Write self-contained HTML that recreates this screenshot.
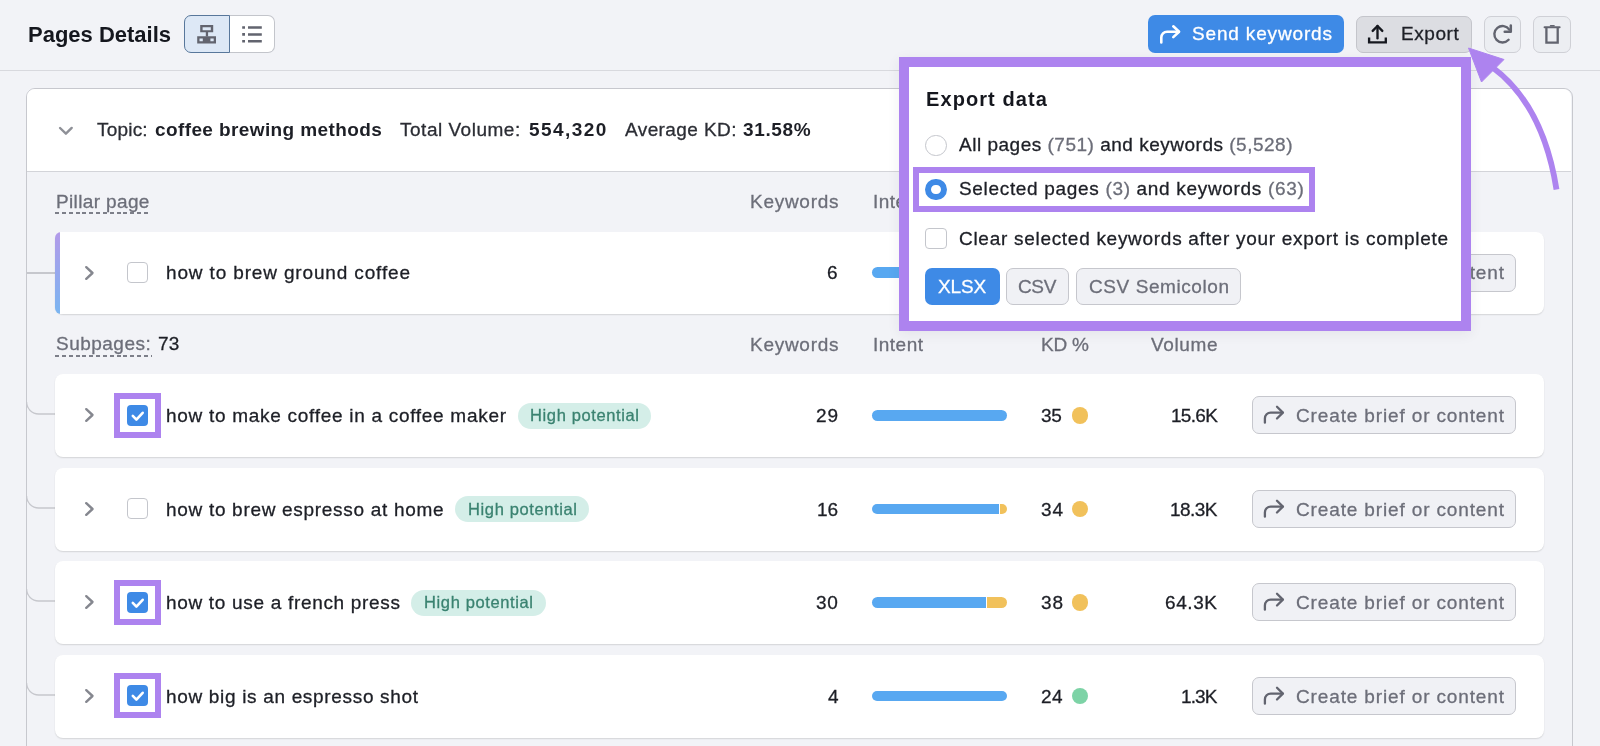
<!DOCTYPE html>
<html><head><meta charset="utf-8"><style>
html,body{margin:0;padding:0;}
body{width:1600px;height:746px;overflow:hidden;position:relative;background:#f2f3f7;font-family:"Liberation Sans",sans-serif;}
.a{position:absolute;}
.t{position:absolute;white-space:nowrap;line-height:1;will-change:transform;-webkit-text-stroke:0.3px currentColor;}
</style></head><body>
<div class="a" style="left:0.00px;top:70.00px;width:1600.00px;height:1.20px;background:#d8d9de"></div>
<div class="t " style="left:28.00px;top:24.18px;font-size:22.00px;letter-spacing:-0.006px;color:#15171e"><span style="font-weight:700;-webkit-text-stroke:0">Pages Details</span></div>
<div class="a" style="left:229.00px;top:15.00px;width:46.00px;height:38.00px;background:#fff;border:1.3px solid #c3c5cb;border-left:none;border-radius:0 7px 7px 0;box-sizing:border-box"></div>
<div class="a" style="left:184.00px;top:15.00px;width:46.00px;height:38.00px;background:#dde8f6;border:1.3px solid #58779b;border-radius:7px 0 0 7px;box-sizing:border-box"></div>
<svg class="a" style="left:190px;top:20px" width="80" height="30" viewBox="190 20 80 30"><g fill="#62646f" fill-rule="evenodd"><path d="M200.2 25h13v7.3h-13zM202.6 27.3v2.9h8.2v-2.9z"/><path d="M205.8 32h2.3v4.5h-2.3z"/><path d="M197.2 36.2h18.8v7.3h-18.8zM199.5 38.4v2.9h3.3v-2.9zM210.4 38.4v2.9h3.3v-2.9z"/><path d="M242.2 26.2h2.8v2.6h-2.8zM248 26.3h13.8v2.5h-13.8zM242.2 33.1h2.8v2.6h-2.8zM248 33.2h13.8v2.5h-13.8zM242.2 40h2.8v2.6h-2.8zM248 40.1h13.8v2.5h-13.8z"/></g></svg>
<div class="a" style="left:1148.00px;top:15.00px;width:196.00px;height:38.00px;background:#3e8ae6;border-radius:7px"></div>
<svg class="a" style="left:1150px;top:20px" width="40" height="30" viewBox="1150 20 40 30"><g fill="none" stroke="#fff" stroke-width="2.6" stroke-linecap="round" stroke-linejoin="round"><path d="M1161.3 42.5V37.5A5.8 5.8 0 0 1 1167.1 31.7H1178.6"/><path d="M1173.3 26.3L1179.1 31.7L1173.3 37.1"/></g></svg>
<div class="t " style="left:1192.40px;top:24.32px;font-size:19.00px;letter-spacing:0.841px;color:#fff">Send keywords</div>
<div class="a" style="left:1356.00px;top:15.50px;width:116.00px;height:37.50px;background:#dcdde2;border:1.2px solid #c4c5cb;border-radius:7px;box-sizing:border-box"></div>
<svg class="a" style="left:1360px;top:20px" width="40" height="30" viewBox="1360 20 40 30"><g fill="none" stroke="#16181f" stroke-width="2.35" stroke-linecap="round" stroke-linejoin="round"><path d="M1369.1 38.6V42.4H1385.8V38.6" stroke-linecap="square" stroke-linejoin="miter"/><path d="M1377.5 26V38.2"/><path d="M1372.7 30.9L1377.5 26L1382.3 30.9"/></g></svg>
<div class="t " style="left:1401.40px;top:24.32px;font-size:19.00px;letter-spacing:0.558px;color:#1d1f26">Export</div>
<div class="a" style="left:1483.50px;top:15.50px;width:37.50px;height:37.50px;background:#eceef2;border:1.2px solid #cfd0d6;border-radius:7px;box-sizing:border-box"></div>
<div class="a" style="left:1533.00px;top:15.50px;width:38.00px;height:37.50px;background:#eceef2;border:1.2px solid #cfd0d6;border-radius:7px;box-sizing:border-box"></div>
<svg class="a" style="left:1486px;top:18px" width="80" height="32" viewBox="1486 18 80 32"><g fill="none" stroke="#62646f" stroke-linecap="round" stroke-linejoin="round"><path d="M1508.6 39.8A8.2 8.2 0 1 1 1509.3 29.6" stroke-width="2.4"/><path d="M1510.8 25.6V31.7H1504.7" stroke-width="2.5"/><path d="M1544.6 27.3H1559.6" stroke-width="2.1"/><path d="M1550.6 25.7H1554" stroke-width="1.6"/><path d="M1546.4 28.2V42.6H1557.7V28.2" stroke-width="2.3" stroke-linejoin="miter"/></g></svg>
<div class="a" style="left:26.00px;top:88.00px;width:1546.50px;height:712.00px;background:#f2f3f7;border:1.6px solid #c7c8ce;border-radius:9px;box-sizing:border-box"></div>
<div class="a" style="left:27.40px;top:89.40px;width:1543.70px;height:82.60px;background:#fff;border-radius:8px 8px 0 0;border-bottom:1.2px solid #d3d4d9;box-sizing:border-box"></div>
<svg class="a" style="left:57px;top:124px" width="18" height="14" viewBox="0 0 18 14"><path d="M3.05 4L8.9 9.7L14.7 3.9" fill="none" stroke="#8e9097" stroke-width="2.4" stroke-linecap="round" stroke-linejoin="round"/></svg>
<div class="t " style="left:96.60px;top:120.22px;font-size:19.00px;letter-spacing:0.194px;color:#2b2d34">Topic:</div>
<div class="t " style="left:155.30px;top:120.22px;font-size:19.00px;letter-spacing:0.393px;"><span style="font-weight:700;-webkit-text-stroke:0;color:#1d1f26">coffee brewing methods</span></div>
<div class="t " style="left:400.20px;top:120.22px;font-size:19.00px;letter-spacing:0.512px;color:#2b2d34">Total Volume:</div>
<div class="t " style="left:528.60px;top:120.22px;font-size:19.00px;letter-spacing:1.453px;"><span style="font-weight:700;-webkit-text-stroke:0;color:#1d1f26">554,320</span></div>
<div class="t " style="left:624.60px;top:120.22px;font-size:19.00px;letter-spacing:0.403px;color:#2b2d34">Average KD:</div>
<div class="t " style="left:742.90px;top:120.22px;font-size:19.00px;letter-spacing:0.630px;"><span style="font-weight:700;-webkit-text-stroke:0;color:#1d1f26">31.58%</span></div>
<div class="t " style="left:56.40px;top:191.52px;font-size:19.00px;letter-spacing:0.363px;color:#6c6e79">Pillar page</div>
<div class="a" style="left:55.20px;top:212.20px;width:95.80px;height:1.80px;background:repeating-linear-gradient(90deg,#7d7f89 0,#7d7f89 4px,transparent 4px,transparent 6.85px)"></div>
<div class="t " style="left:750.00px;top:191.92px;font-size:19.00px;letter-spacing:0.724px;color:#6c6e79">Keywords</div>
<div class="t " style="left:873.00px;top:191.92px;font-size:19.00px;letter-spacing:0.492px;color:#6c6e79">Intent</div>
<div class="a" style="left:26.50px;top:272.40px;width:29.50px;height:1.30px;background:#c6c7cd"></div>
<div class="a" style="left:55.00px;top:231.50px;width:1489.00px;height:82.50px;background:#fff;border-radius:8px;box-shadow:0 1px 1.5px rgba(0,0,0,0.13)"></div>
<div class="a" style="left:55.00px;top:231.50px;width:6.00px;height:82.50px;background:linear-gradient(#b39ae9,#7ab5f1);border-radius:8px 0 0 8px"></div>
<div class="a" style="left:59.50px;top:231.50px;width:4.50px;height:82.50px;background:#fff"></div>
<svg class="a" style="left:82px;top:264.50px" width="14" height="16" viewBox="0 0 14 16"><path d="M4.25 2.15L10.5 8L4.25 13.85" fill="none" stroke="#85878f" stroke-width="2.4" stroke-linecap="round" stroke-linejoin="round"/></svg>
<div class="a" style="left:126.60px;top:261.80px;width:21.40px;height:21.40px;background:#fff;border:1.3px solid #c4c6cc;border-radius:4px;box-sizing:border-box"></div>
<div class="t " style="left:166.00px;top:263.12px;font-size:19.00px;letter-spacing:0.851px;color:#1d1f26">how to brew ground coffee</div>
<div class="t " style="left:827.44px;top:263.12px;font-size:19.00px;letter-spacing:0.000px;color:#1d1f26">6</div>
<div class="a" style="left:872.00px;top:267.20px;width:134.60px;height:10.60px;background:#58a8f1;border-radius:6px"></div>
<div class="a" style="left:1252.00px;top:253.50px;width:264.00px;height:38.00px;background:#f0f1f5;border:1.3px solid #c6c7cd;border-radius:7px;box-sizing:border-box"></div><svg class="a" style="left:1250px;top:257.50px" width="40" height="30" viewBox="1250 257.50 40 30"><g fill="none" stroke="#62646f" stroke-width="2.3" stroke-linecap="round" stroke-linejoin="round"><path d="M1264.9 280.20V275.90A5.8 5.8 0 0 1 1270.7 270.10H1282.6"/><path d="M1277 264.20L1282.9 270.10L1277 276.00"/></g></svg><div class="t " style="left:1296.00px;top:263.32px;font-size:19.00px;letter-spacing:0.861px;color:#6c6e79">Create brief or content</div>
<div class="t " style="left:56.10px;top:334.42px;font-size:19.00px;letter-spacing:0.480px;color:#6c6e79">Subpages:</div>
<div class="t " style="left:157.80px;top:334.42px;font-size:19.00px;letter-spacing:0.272px;color:#1d1f26">73</div>
<div class="a" style="left:55.20px;top:355.20px;width:96.80px;height:1.80px;background:repeating-linear-gradient(90deg,#7d7f89 0,#7d7f89 4px,transparent 4px,transparent 6.85px)"></div>
<div class="t " style="left:750.00px;top:334.52px;font-size:19.00px;letter-spacing:0.724px;color:#6c6e79">Keywords</div>
<div class="t " style="left:873.00px;top:334.52px;font-size:19.00px;letter-spacing:0.492px;color:#6c6e79">Intent</div>
<div class="t " style="left:1041.00px;top:334.52px;font-size:19.00px;letter-spacing:-0.188px;color:#6c6e79">KD %</div>
<div class="t " style="left:1151.00px;top:334.52px;font-size:19.00px;letter-spacing:0.627px;color:#6c6e79">Volume</div>
<svg class="a" style="left:26px;top:376.30px" width="31" height="40" viewBox="0 0 31 40"><path d="M0.6 26a12 12 0 0 0 12 12H31" fill="none" stroke="#c6c7cd" stroke-width="1.3"/></svg>
<div class="a" style="left:55.00px;top:374.00px;width:1489.00px;height:83.00px;background:#fff;border-radius:8px;box-shadow:0 1px 1.5px rgba(0,0,0,0.13)"></div>
<svg class="a" style="left:82px;top:407.30px" width="14" height="16" viewBox="0 0 14 16"><path d="M4.25 2.15L10.5 8L4.25 13.85" fill="none" stroke="#85878f" stroke-width="2.4" stroke-linecap="round" stroke-linejoin="round"/></svg>
<div class="a" style="left:114.00px;top:392.80px;width:47.00px;height:45.00px;border:6.5px solid #ad83ef;box-sizing:border-box"></div>
<div class="a" style="left:126.60px;top:404.60px;width:21.40px;height:21.40px;background:#3e8ae6;border-radius:4px"></div><svg class="a" style="left:126.6px;top:404.60px" width="21.4" height="21.4" viewBox="0 0 21.4 21.4"><path d="M5.8 10.9l3.6 3.7 6.3-6.8" fill="none" stroke="#fff" stroke-width="2.6" stroke-linecap="round" stroke-linejoin="round"/></svg>
<div class="t " style="left:166.00px;top:406.12px;font-size:19.00px;letter-spacing:0.712px;color:#1d1f26">how to make coffee in a coffee maker</div>
<div class="a" style="left:517.90px;top:402.80px;width:133.30px;height:26.20px;background:#d4eee8;border-radius:14px"></div>
<div class="t " style="left:530.20px;top:407.13px;font-size:16.50px;letter-spacing:0.623px;color:#3a8270">High potential</div>
<div class="t " style="left:816.00px;top:406.12px;font-size:19.00px;letter-spacing:0.872px;color:#1d1f26">29</div>
<div class="a" style="left:872.00px;top:410.00px;width:134.60px;height:10.60px;background:#58a8f1;border-radius:6px"></div>
<div class="t " style="left:1040.60px;top:406.12px;font-size:19.00px;letter-spacing:-0.328px;color:#1d1f26">35</div>
<div class="a" style="left:1071.60px;top:407.00px;width:16.60px;height:16.60px;background:#f1c15b;border-radius:50%"></div>
<div class="t " style="left:1170.60px;top:406.12px;font-size:19.00px;letter-spacing:-0.712px;color:#1d1f26">15.6K</div>
<div class="a" style="left:1252.00px;top:396.30px;width:264.00px;height:38.00px;background:#f0f1f5;border:1.3px solid #c6c7cd;border-radius:7px;box-sizing:border-box"></div><svg class="a" style="left:1250px;top:400.30px" width="40" height="30" viewBox="1250 400.30 40 30"><g fill="none" stroke="#62646f" stroke-width="2.3" stroke-linecap="round" stroke-linejoin="round"><path d="M1264.9 423.00V418.70A5.8 5.8 0 0 1 1270.7 412.90H1282.6"/><path d="M1277 407.00L1282.9 412.90L1277 418.80"/></g></svg><div class="t " style="left:1296.00px;top:406.12px;font-size:19.00px;letter-spacing:0.861px;color:#6c6e79">Create brief or content</div>
<svg class="a" style="left:26px;top:469.80px" width="31" height="40" viewBox="0 0 31 40"><path d="M0.6 26a12 12 0 0 0 12 12H31" fill="none" stroke="#c6c7cd" stroke-width="1.3"/></svg>
<div class="a" style="left:55.00px;top:467.50px;width:1489.00px;height:83.00px;background:#fff;border-radius:8px;box-shadow:0 1px 1.5px rgba(0,0,0,0.13)"></div>
<svg class="a" style="left:82px;top:500.80px" width="14" height="16" viewBox="0 0 14 16"><path d="M4.25 2.15L10.5 8L4.25 13.85" fill="none" stroke="#85878f" stroke-width="2.4" stroke-linecap="round" stroke-linejoin="round"/></svg>
<div class="a" style="left:126.60px;top:498.10px;width:21.40px;height:21.40px;background:#fff;border:1.3px solid #c4c6cc;border-radius:4px;box-sizing:border-box"></div>
<div class="t " style="left:166.00px;top:499.62px;font-size:19.00px;letter-spacing:0.695px;color:#1d1f26">how to brew espresso at home</div>
<div class="a" style="left:455.30px;top:496.30px;width:133.70px;height:26.20px;background:#d4eee8;border-radius:14px"></div>
<div class="t " style="left:467.60px;top:500.63px;font-size:16.50px;letter-spacing:0.623px;color:#3a8270">High potential</div>
<div class="t " style="left:816.87px;top:499.62px;font-size:19.00px;letter-spacing:0.000px;color:#1d1f26">16</div>
<div class="a" style="left:872.00px;top:503.50px;width:134.60px;height:10.60px;background:linear-gradient(90deg,#58a8f1 0,#58a8f1 126.5px,#fff 126.5px,#fff 127.7px,#f1c15b 127.7px);border-radius:6px"></div>
<div class="t " style="left:1040.60px;top:499.62px;font-size:19.00px;letter-spacing:0.872px;color:#1d1f26">34</div>
<div class="a" style="left:1071.60px;top:500.50px;width:16.60px;height:16.60px;background:#f1c15b;border-radius:50%"></div>
<div class="t " style="left:1170.10px;top:499.62px;font-size:19.00px;letter-spacing:-0.587px;color:#1d1f26">18.3K</div>
<div class="a" style="left:1252.00px;top:489.80px;width:264.00px;height:38.00px;background:#f0f1f5;border:1.3px solid #c6c7cd;border-radius:7px;box-sizing:border-box"></div><svg class="a" style="left:1250px;top:493.80px" width="40" height="30" viewBox="1250 493.80 40 30"><g fill="none" stroke="#62646f" stroke-width="2.3" stroke-linecap="round" stroke-linejoin="round"><path d="M1264.9 516.50V512.20A5.8 5.8 0 0 1 1270.7 506.40H1282.6"/><path d="M1277 500.50L1282.9 506.40L1277 512.30"/></g></svg><div class="t " style="left:1296.00px;top:499.62px;font-size:19.00px;letter-spacing:0.861px;color:#6c6e79">Create brief or content</div>
<svg class="a" style="left:26px;top:563.30px" width="31" height="40" viewBox="0 0 31 40"><path d="M0.6 26a12 12 0 0 0 12 12H31" fill="none" stroke="#c6c7cd" stroke-width="1.3"/></svg>
<div class="a" style="left:55.00px;top:561.00px;width:1489.00px;height:83.00px;background:#fff;border-radius:8px;box-shadow:0 1px 1.5px rgba(0,0,0,0.13)"></div>
<svg class="a" style="left:82px;top:594.30px" width="14" height="16" viewBox="0 0 14 16"><path d="M4.25 2.15L10.5 8L4.25 13.85" fill="none" stroke="#85878f" stroke-width="2.4" stroke-linecap="round" stroke-linejoin="round"/></svg>
<div class="a" style="left:114.00px;top:579.80px;width:47.00px;height:45.00px;border:6.5px solid #ad83ef;box-sizing:border-box"></div>
<div class="a" style="left:126.60px;top:591.60px;width:21.40px;height:21.40px;background:#3e8ae6;border-radius:4px"></div><svg class="a" style="left:126.6px;top:591.60px" width="21.4" height="21.4" viewBox="0 0 21.4 21.4"><path d="M5.8 10.9l3.6 3.7 6.3-6.8" fill="none" stroke="#fff" stroke-width="2.6" stroke-linecap="round" stroke-linejoin="round"/></svg>
<div class="t " style="left:166.00px;top:593.12px;font-size:19.00px;letter-spacing:0.685px;color:#1d1f26">how to use a french press</div>
<div class="a" style="left:411.40px;top:589.80px;width:134.60px;height:26.20px;background:#d4eee8;border-radius:14px"></div>
<div class="t " style="left:423.70px;top:594.13px;font-size:16.50px;letter-spacing:0.623px;color:#3a8270">High potential</div>
<div class="t " style="left:816.20px;top:593.12px;font-size:19.00px;letter-spacing:0.672px;color:#1d1f26">30</div>
<div class="a" style="left:872.00px;top:597.00px;width:134.60px;height:10.60px;background:linear-gradient(90deg,#58a8f1 0,#58a8f1 113.6px,#fff 113.6px,#fff 114.8px,#f1c15b 114.8px);border-radius:6px"></div>
<div class="t " style="left:1040.60px;top:593.12px;font-size:19.00px;letter-spacing:0.872px;color:#1d1f26">38</div>
<div class="a" style="left:1071.60px;top:594.00px;width:16.60px;height:16.60px;background:#f1c15b;border-radius:50%"></div>
<div class="t " style="left:1165.40px;top:593.12px;font-size:19.00px;letter-spacing:0.588px;color:#1d1f26">64.3K</div>
<div class="a" style="left:1252.00px;top:583.30px;width:264.00px;height:38.00px;background:#f0f1f5;border:1.3px solid #c6c7cd;border-radius:7px;box-sizing:border-box"></div><svg class="a" style="left:1250px;top:587.30px" width="40" height="30" viewBox="1250 587.30 40 30"><g fill="none" stroke="#62646f" stroke-width="2.3" stroke-linecap="round" stroke-linejoin="round"><path d="M1264.9 610.00V605.70A5.8 5.8 0 0 1 1270.7 599.90H1282.6"/><path d="M1277 594.00L1282.9 599.90L1277 605.80"/></g></svg><div class="t " style="left:1296.00px;top:593.12px;font-size:19.00px;letter-spacing:0.861px;color:#6c6e79">Create brief or content</div>
<svg class="a" style="left:26px;top:656.80px" width="31" height="40" viewBox="0 0 31 40"><path d="M0.6 26a12 12 0 0 0 12 12H31" fill="none" stroke="#c6c7cd" stroke-width="1.3"/></svg>
<div class="a" style="left:55.00px;top:654.50px;width:1489.00px;height:83.00px;background:#fff;border-radius:8px;box-shadow:0 1px 1.5px rgba(0,0,0,0.13)"></div>
<svg class="a" style="left:82px;top:687.80px" width="14" height="16" viewBox="0 0 14 16"><path d="M4.25 2.15L10.5 8L4.25 13.85" fill="none" stroke="#85878f" stroke-width="2.4" stroke-linecap="round" stroke-linejoin="round"/></svg>
<div class="a" style="left:114.00px;top:673.30px;width:47.00px;height:45.00px;border:6.5px solid #ad83ef;box-sizing:border-box"></div>
<div class="a" style="left:126.60px;top:685.10px;width:21.40px;height:21.40px;background:#3e8ae6;border-radius:4px"></div><svg class="a" style="left:126.6px;top:685.10px" width="21.4" height="21.4" viewBox="0 0 21.4 21.4"><path d="M5.8 10.9l3.6 3.7 6.3-6.8" fill="none" stroke="#fff" stroke-width="2.6" stroke-linecap="round" stroke-linejoin="round"/></svg>
<div class="t " style="left:166.00px;top:686.62px;font-size:19.00px;letter-spacing:0.675px;color:#1d1f26">how big is an espresso shot</div>
<div class="t " style="left:828.00px;top:686.62px;font-size:19.00px;letter-spacing:0.000px;color:#1d1f26">4</div>
<div class="a" style="left:872.00px;top:690.50px;width:134.60px;height:10.60px;background:#58a8f1;border-radius:6px"></div>
<div class="t " style="left:1040.60px;top:686.62px;font-size:19.00px;letter-spacing:0.472px;color:#1d1f26">24</div>
<div class="a" style="left:1071.60px;top:687.50px;width:16.60px;height:16.60px;background:#7dd3a6;border-radius:50%"></div>
<div class="t " style="left:1181.10px;top:686.62px;font-size:19.00px;letter-spacing:-0.928px;color:#1d1f26">1.3K</div>
<div class="a" style="left:1252.00px;top:676.80px;width:264.00px;height:38.00px;background:#f0f1f5;border:1.3px solid #c6c7cd;border-radius:7px;box-sizing:border-box"></div><svg class="a" style="left:1250px;top:680.80px" width="40" height="30" viewBox="1250 680.80 40 30"><g fill="none" stroke="#62646f" stroke-width="2.3" stroke-linecap="round" stroke-linejoin="round"><path d="M1264.9 703.50V699.20A5.8 5.8 0 0 1 1270.7 693.40H1282.6"/><path d="M1277 687.50L1282.9 693.40L1277 699.30"/></g></svg><div class="t " style="left:1296.00px;top:686.62px;font-size:19.00px;letter-spacing:0.861px;color:#6c6e79">Create brief or content</div>
<div class="a" style="left:899.00px;top:57.00px;width:572.00px;height:274.00px;background:#fff;border:10px solid #ad83ef;box-sizing:border-box;box-shadow:0 3px 12px rgba(40,40,60,0.07)"></div>
<div class="t " style="left:926.00px;top:89.37px;font-size:20.00px;letter-spacing:1.084px;"><span style="font-weight:700;-webkit-text-stroke:0;color:#15171e">Export data</span></div>
<div class="a" style="left:925.40px;top:134.80px;width:21.40px;height:21.40px;background:#fff;border:1.3px solid #c4c6cc;border-radius:50%;box-sizing:border-box"></div>
<div class="t " style="left:959.00px;top:135.22px;font-size:19.00px;letter-spacing:0.506px;"><span style="color:#1d1f26">All pages </span><span style="color:#6c6e79">(751)</span><span style="color:#1d1f26"> and keywords </span><span style="color:#6c6e79">(5,528)</span></div>
<div class="a" style="left:913.00px;top:167.00px;width:401.70px;height:45.30px;border:6.3px solid #ad83ef;box-sizing:border-box"></div>
<div class="a" style="left:925.20px;top:178.90px;width:21.60px;height:21.60px;background:#fff;border:6.1px solid #3e8ae6;border-radius:50%;box-sizing:border-box"></div>
<div class="t " style="left:959.00px;top:179.42px;font-size:19.00px;letter-spacing:0.676px;"><span style="color:#1d1f26">Selected pages </span><span style="color:#6c6e79">(3)</span><span style="color:#1d1f26"> and keywords </span><span style="color:#6c6e79">(63)</span></div>
<div class="a" style="left:925.40px;top:228.40px;width:21.40px;height:21.00px;background:#fff;border:1.3px solid #c4c6cc;border-radius:4px;box-sizing:border-box"></div>
<div class="t " style="left:959.00px;top:228.92px;font-size:19.00px;letter-spacing:0.712px;color:#1d1f26">Clear selected keywords after your export is complete</div>
<div class="a" style="left:925.00px;top:268.20px;width:74.70px;height:37.10px;background:#3e8ae6;border-radius:7px"></div>
<div class="t " style="left:938.40px;top:277.22px;font-size:19.00px;letter-spacing:-0.128px;color:#fff">XLSX</div>
<div class="a" style="left:1005.80px;top:268.20px;width:63.50px;height:37.10px;background:#f0f1f5;border:1.3px solid #c6c7cd;border-radius:7px;box-sizing:border-box"></div>
<div class="t " style="left:1018.30px;top:277.22px;font-size:19.00px;letter-spacing:-0.382px;color:#6c6e79">CSV</div>
<div class="a" style="left:1076.30px;top:268.20px;width:165.10px;height:37.10px;background:#f0f1f5;border:1.3px solid #c6c7cd;border-radius:7px;box-sizing:border-box"></div>
<div class="t " style="left:1089.00px;top:277.22px;font-size:19.00px;letter-spacing:0.579px;color:#6c6e79">CSV Semicolon</div>
<svg class="a" style="left:0;top:0" width="1600" height="746" viewBox="0 0 1600 746"><path d="M1556.5 189.5Q1543 104.5 1492 67" fill="none" stroke="#ad83ef" stroke-width="5.8"/><path d="M1468.5 48L1504 59.5L1481.5 82Z" fill="#ad83ef" stroke="#ad83ef" stroke-width="1" stroke-linejoin="round"/></svg>
</body></html>
